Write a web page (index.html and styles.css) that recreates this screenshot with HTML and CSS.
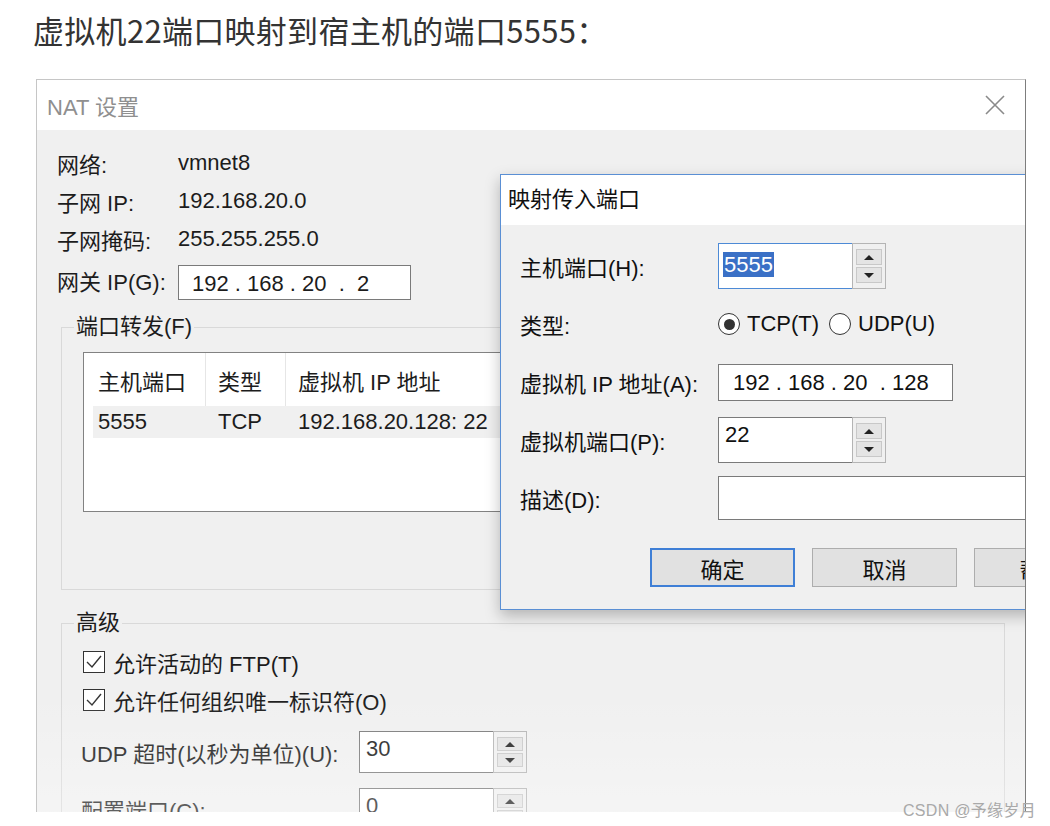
FILE: index.html
```html
<!DOCTYPE html>
<html lang="zh-CN">

<head>
    <meta charset="UTF-8">
    <title>NAT 设置</title>
    <link rel="stylesheet" href="styles.css">
</head>

<body>
    <h1 class="heading">虚拟机22端口映射到宿主机的端口5555：</h1>

    <div class="shot">
        <div class="nat-title">
            <span>NAT 设置</span>
            <svg class="close" width="20" height="20" viewBox="0 0 20 20">
                <path d="M1 1L19 19M19 1L1 19" stroke="#8a8a8a" stroke-width="1.6" fill="none" />
            </svg>
        </div>

        <div class="nat-body">
            <div class="info">
                <span>网络:</span><span>vmnet8</span>
                <span>子网 IP:</span><span>192.168.20.0</span>
                <span>子网掩码:</span><span>255.255.255.0</span>
                <span class="gw">网关 IP(G):</span>
                <span class="gw ip-box">192 . 168 . 20  .  2</span>
            </div>

            <fieldset class="group forward">
                <legend>端口转发(F)</legend>
                <div class="table">
                    <div class="thead">
                        <span>主机端口</span><span>类型</span><span>虚拟机 IP 地址</span>
                    </div>
                    <div class="trow">
                        <span>5555</span><span>TCP</span><span>192.168.20.128: 22</span>
                    </div>
                </div>
            </fieldset>

            <fieldset class="group advanced">
                <legend>高级</legend>
                <div class="check">
                    <svg width="22" height="22" viewBox="0 0 22 22">
                        <rect x="0.5" y="0.5" width="21" height="21" fill="#fff" stroke="#333" />
                        <path d="M4 11L9 16L18 5" stroke="#333" stroke-width="1.4" fill="none" />
                    </svg>
                    <span>允许活动的 FTP(T)</span>
                </div>
                <div class="check">
                    <svg width="22" height="22" viewBox="0 0 22 22">
                        <rect x="0.5" y="0.5" width="21" height="21" fill="#fff" stroke="#333" />
                        <path d="M4 11L9 16L18 5" stroke="#333" stroke-width="1.4" fill="none" />
                    </svg>
                    <span>允许任何组织唯一标识符(O)</span>
                </div>
                <div class="adv-row udp">
                    <span class="adv-label">UDP 超时(以秒为单位)(U):</span>
                    <div class="spin">
                        <div class="spin-field">30</div>
                        <div class="spin-btns"><i class="up"></i><i class="down"></i></div>
                    </div>
                </div>
                <div class="adv-row conf">
                    <span class="adv-label">配置端口(C):</span>
                    <div class="spin">
                        <div class="spin-field">0</div>
                        <div class="spin-btns"><i class="up"></i><i class="down"></i></div>
                    </div>
                </div>
            </fieldset>
        </div>

        <div class="mapping">
            <div class="m-title">映射传入端口</div>
            <div class="m-body">
                <div class="m-row">
                    <span class="m-label">主机端口(H):</span>
                    <div class="spin tall">
                        <div class="spin-field focus"><span class="sel">5555</span></div>
                        <div class="spin-btns"><i class="up"></i><i class="down"></i></div>
                    </div>
                </div>
                <div class="m-row">
                    <span class="m-label">类型:</span>
                    <span class="radio on"><i></i>TCP(T)</span>
                    <span class="radio"><i></i>UDP(U)</span>
                </div>
                <div class="m-row">
                    <span class="m-label">虚拟机 IP 地址(A):</span>
                    <span class="text-box ip">192 . 168 . 20  . 128</span>
                </div>
                <div class="m-row">
                    <span class="m-label">虚拟机端口(P):</span>
                    <div class="spin tall">
                        <div class="spin-field">22</div>
                        <div class="spin-btns"><i class="up"></i><i class="down"></i></div>
                    </div>
                </div>
                <div class="m-row">
                    <span class="m-label">描述(D):</span>
                    <span class="text-box desc"></span>
                </div>
                <div class="m-buttons">
                    <button class="btn default">确定</button>
                    <button class="btn">取消</button>
                    <button class="btn help">帮助</button>
                </div>
            </div>
        </div>

        <div class="fade"></div>
    </div>

    <div class="watermark">CSDN @予缘岁月</div>
</body>

</html>
```

FILE: styles.css
```css
* {
    box-sizing: border-box;
}

body {
    margin: 0;
    width: 1050px;
    height: 826px;
    overflow: hidden;
    position: relative;
    background: #fff;
    font-family: "Liberation Sans", "Noto Sans CJK SC", sans-serif;
    color: #1c1c1c;
}

.heading {
    margin: 0;
    padding: 10px 0 0 33px;
    font: 400 31px/40px "Noto Sans CJK SC", sans-serif;
    letter-spacing: 0.3px;
    color: #333;
}

.shot {
    position: relative;
    margin: 29px 0 0 36px;
    width: 990px;
    height: 733px;
    border: 1px solid #c6c6c6;
    border-right-color: #7d7d7d;
    border-bottom: 0;
    overflow: hidden;
    font-size: 22px;
}

.nat-title {
    height: 50px;
    background: #fff;
    display: flex;
    align-items: center;
    justify-content: space-between;
    padding: 0 20px 0 10px;
    color: #8f8f8f;
}

.nat-body {
    background: #f0f0f0;
    height: 683px;
    padding-top: 14px;
}

.info {
    display: grid;
    grid-template-columns: 121px auto;
    grid-template-rows: 38px 38px 38px 42px;
    align-items: center;
    padding-left: 20px;
}

.info .gw {
    align-self: end;
    line-height: 35px;
}

.ip-box {
    width: 233px;
    height: 35px;
    border: 1px solid #7a7a7a;
    background: #fff;
    padding-left: 13px;
    white-space: pre;
}

.group {
    margin: 15px 20px 0 24px;
    padding: 0 0 0 12px;
    border: 1px solid #d9d9d9;
    min-width: 0;
}

.group legend {
    padding: 0 2px;
    line-height: 24px;
}

.forward {
    padding-bottom: 77px;
}

.advanced {
    margin-top: 21px;
    padding-top: 8px;
}

.table {
    margin: 13px 0 0 9px;
    width: 560px;
    height: 160px;
    background: #fff;
    border: 1px solid #828282;
    padding-left: 9px;
}

.thead,
.trow {
    display: grid;
    grid-template-columns: 112px 80px 1fr;
}

.thead {
    height: 53px;
}

.thead span,
.trow span {
    display: flex;
    align-items: center;
    padding-left: 12px;
}

.thead span:first-child,
.trow span:first-child {
    padding-left: 5px;
}

.thead span+span {
    border-left: 1px solid #e6e6e6;
}

.trow {
    height: 32px;
    background: #f0f0f0;
}

.trow span+span {
    padding-left: 13px;
}

.check {
    display: flex;
    align-items: center;
    gap: 8px;
    height: 38px;
    margin-left: 9px;
}

.adv-row {
    display: flex;
    align-items: center;
    margin-left: 7px;
}

.udp {
    margin-top: 12px;
}

.conf {
    margin-top: 15px;
}

.adv-label {
    width: 278px;
}

.spin {
    display: flex;
    height: 42px;
}

.spin.tall {
    height: 46px;
}

.spin-field {
    width: 134px;
    background: #fff;
    border: 1px solid #7a7a7a;
    border-right: 0;
    padding: 4px 6px 0;
    line-height: 26px;
}

.spin-field.focus {
    border-color: #4d8ad6;
    padding-left: 4px;
    padding-top: 8px;
}

.sel {
    background: #3a70c6;
    color: #fff;
    padding: 0 1px;
}

.spin-btns {
    width: 34px;
    border: 1px solid #b4b4b4;
    background: #f0f0f0;
    display: flex;
    flex-direction: column;
    gap: 2px;
    padding: 5px 3px;
}

.spin-btns i {
    flex: 1;
    background: #e4e4e4;
    border: 1px solid #c8c8c8;
    display: flex;
    align-items: center;
    justify-content: center;
}

.spin-btns i::before {
    content: "";
    border-left: 5px solid transparent;
    border-right: 5px solid transparent;
}

.spin-btns .up::before {
    border-bottom: 5px solid #222;
}

.spin-btns .down::before {
    border-top: 5px solid #222;
}

.mapping {
    position: absolute;
    left: 463px;
    top: 94px;
    width: 640px;
    height: 436px;
    border: 1px solid #5a8fd4;
    background: #f0f0f0;
    box-shadow: 0 6px 14px rgba(0, 0, 0, 0.25);
    color: #111;
}

.m-title {
    height: 50px;
    background: #fff;
    padding-left: 7px;
    line-height: 50px;
}

.m-body {
    padding: 12px 0 0 19px;
}

.m-row {
    display: flex;
    align-items: center;
    height: 58px;
}

.m-label {
    width: 198px;
    flex-shrink: 0;
}

.radio {
    display: inline-flex;
    align-items: center;
    gap: 7px;
    margin-right: 10px;
}

.radio i {
    width: 22px;
    height: 22px;
    border: 1.5px solid #333;
    border-radius: 50%;
    background: #fff;
    display: flex;
    align-items: center;
    justify-content: center;
}

.radio.on i::after {
    content: "";
    width: 11px;
    height: 11px;
    border-radius: 50%;
    background: #333;
}

.text-box {
    display: block;
    background: #fff;
    border: 1px solid #7a7a7a;
    white-space: pre;
}

.text-box.ip {
    width: 235px;
    height: 37px;
    line-height: 35px;
    padding-left: 14px;
}

.text-box.desc {
    width: 400px;
    height: 44px;
}

.m-buttons {
    display: flex;
    gap: 17px;
    margin-top: 21px;
    padding-left: 130px;
}

.btn {
    width: 145px;
    height: 39px;
    flex-shrink: 0;
    background: #e1e1e1;
    border: 1px solid #adadad;
    font: inherit;
    color: #111;
    padding: 0;
}

.btn.default {
    border: 2px solid #3f7fd6;
}

.btn.help {
    padding-right: 10px;
}

.fade {
    position: absolute;
    left: 0;
    right: 0;
    bottom: 0;
    height: 120px;
    background: linear-gradient(rgba(255, 255, 255, 0), rgba(255, 255, 255, 0.3));
    pointer-events: none;
}

.watermark {
    position: absolute;
    left: 903px;
    top: 797px;
    font-size: 16px;
    letter-spacing: 0.3px;
    color: #a9a9a9;
}
```
